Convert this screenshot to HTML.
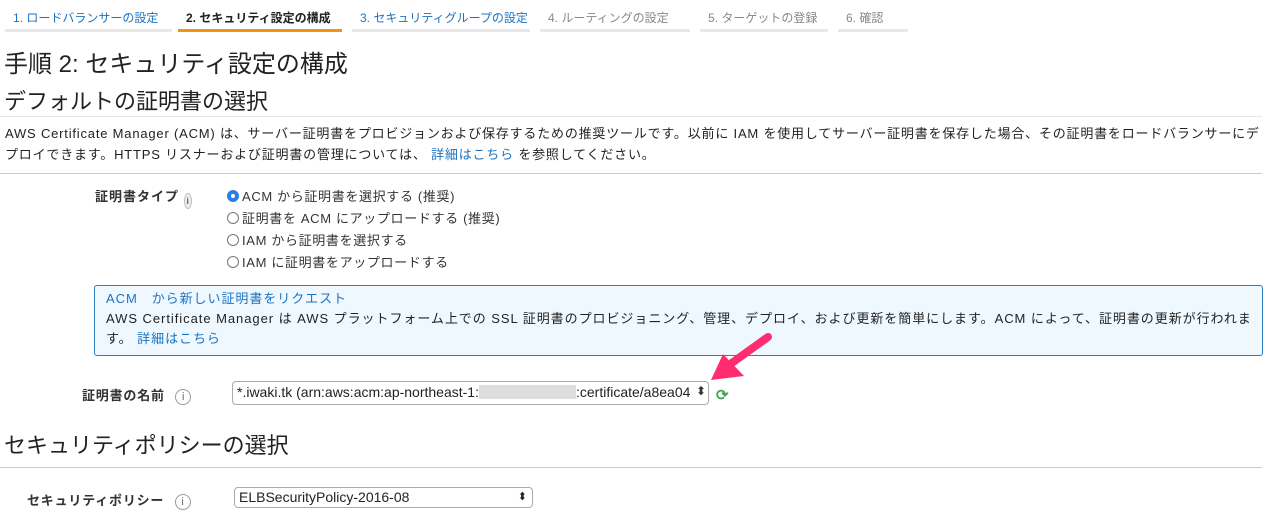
<!DOCTYPE html>
<html><head><meta charset="utf-8"><style>
*{margin:0;padding:0;box-sizing:border-box}
body{width:1268px;height:520px;overflow:hidden;background:#fff;font-family:"Liberation Sans","Noto Sans CJK JP",sans-serif;color:#333;position:relative}
.a{position:absolute;white-space:nowrap}
.tab{position:absolute;top:0;height:32px;font-size:12px;padding:9px 0 0 8px;border-bottom:3px solid #e8e8e8;color:#888}
.blue{color:#1a73c0}
.hr{position:absolute;left:0;right:6px;height:1px;background:#ccc}
.rad{position:absolute;left:227px;font-size:13px;white-space:nowrap;letter-spacing:0.65px}
.rad i{display:inline-block;width:12px;height:12px;border:1px solid #777;border-radius:50%;vertical-align:-1px;margin-right:3px;background:#fff}
.info{display:inline-block;width:16px;height:16px;border:1px solid #999;border-radius:50%;font-size:11px;text-align:center;line-height:14px;color:#666;font-style:normal;letter-spacing:0}
.sel{position:absolute;border:1px solid #aaa;border-radius:4px;font-size:14px;padding:2px 4px;background:#fff;color:#222;white-space:nowrap;overflow:hidden}
</style></head><body>
<div class="tab blue" style="left:5px;width:167px">1. ロードバランサーの設定</div>
<div class="tab" style="left:178px;width:164px;border-color:#f0950f;color:#222;font-weight:bold">2. セキュリティ設定の構成</div>
<div class="tab blue" style="left:352px;width:178px">3. セキュリティグループの設定</div>
<div class="tab" style="left:540px;width:150px">4. ルーティングの設定</div>
<div class="tab" style="left:700px;width:128px">5. ターゲットの登録</div>
<div class="tab" style="left:838px;width:70px">6. 確認</div>
<div class="a" style="left:4px;top:44px;font-size:24px;color:#222">手順 2: セキュリティ設定の構成</div>
<div class="a" style="left:4px;top:84px;font-size:22px;color:#222">デフォルトの証明書の選択</div>
<div class="hr" style="top:116px;background:#e6e6e6"></div>
<div class="a" style="left:5px;top:123px;font-size:13px;line-height:21px;color:#222;letter-spacing:0.8px">AWS Certificate Manager (ACM) は、サーバー証明書をプロビジョンおよび保存するための推奨ツールです。以前に IAM を使用してサーバー証明書を保存した場合、その証明書をロードバランサーにデ<br>プロイできます。HTTPS リスナーおよび証明書の管理については、 <span class="blue">詳細はこちら</span> を参照してください。</div>
<div class="hr" style="top:173px"></div>
<div class="a" style="left:95px;top:186px;font-size:13px;font-weight:bold;color:#333;letter-spacing:1px">証明書タイプ <i class="info" style="width:8px;height:16px;border-color:#bbb;background:#eee;font-size:9px;vertical-align:-3px">i</i></div>
<div class="rad" style="top:186px"><i style="border:4px solid #2a7fe6"></i>ACM から証明書を選択する (推奨)</div>
<div class="rad" style="top:208px"><i></i>証明書を ACM にアップロードする (推奨)</div>
<div class="rad" style="top:230px"><i></i>IAM から証明書を選択する</div>
<div class="rad" style="top:252px"><i></i>IAM に証明書をアップロードする</div>
<div class="a" style="left:94px;top:285px;width:1169px;height:71px;border:1px solid #2c7ebf;border-radius:3px;background:#f0f8ff;white-space:normal;padding:3px 0 0 11px;font-size:13px;line-height:20px;color:#222;letter-spacing:0.95px"><span class="blue">ACM　から新しい証明書をリクエスト</span><br><span style="white-space:nowrap">AWS Certificate Manager は AWS プラットフォーム上での SSL 証明書のプロビジョニング、管理、デプロイ、および更新を簡単にします。ACM によって、証明書の更新が行われま</span><br>す。 <span class="blue">詳細はこちら</span></div>
<div class="a" style="left:82px;top:385px;font-size:13px;font-weight:bold;letter-spacing:0.8px">証明書の名前 <span style="display:inline-block;width:6px"></span><i class="info" style="font-weight:normal">i</i></div>
<div class="sel" style="left:232px;top:381px;width:477px;height:24px">*.iwaki.tk (arn:aws:acm:ap-northeast-1:<span style="display:inline-block;width:97px;height:14px;background:#ddd;vertical-align:-2px"></span>:certificate/a8ea04</div>
<div class="a" style="left:694px;top:384px;font-size:12px;background:#fff;padding:0 2px">⬍</div>
<div class="a" style="left:716px;top:386px;font-size:15px;color:#3aaa4a;font-weight:bold">⟳</div>
<svg class="a" style="left:700px;top:330px" width="80" height="60"><line x1="68" y1="7" x2="22" y2="40" stroke="#ff2d6f" stroke-width="8" stroke-linecap="round"/><polygon points="11,50 23,24 44,46" fill="#ff2d6f"/></svg>
<div class="a" style="left:4px;top:428px;font-size:22px;color:#222">セキュリティポリシーの選択</div>
<div class="hr" style="top:467px"></div>
<div class="a" style="left:27px;top:490px;font-size:13px;font-weight:bold;letter-spacing:0.8px">セキュリティポリシー <span style="display:inline-block;width:6px"></span><i class="info" style="font-weight:normal">i</i></div>
<div class="sel" style="left:234px;top:487px;width:299px;height:21px;padding-top:1px">ELBSecurityPolicy-2016-08<span style="position:absolute;right:5px;top:2px;font-size:11px">⬍</span></div>
</body></html>
